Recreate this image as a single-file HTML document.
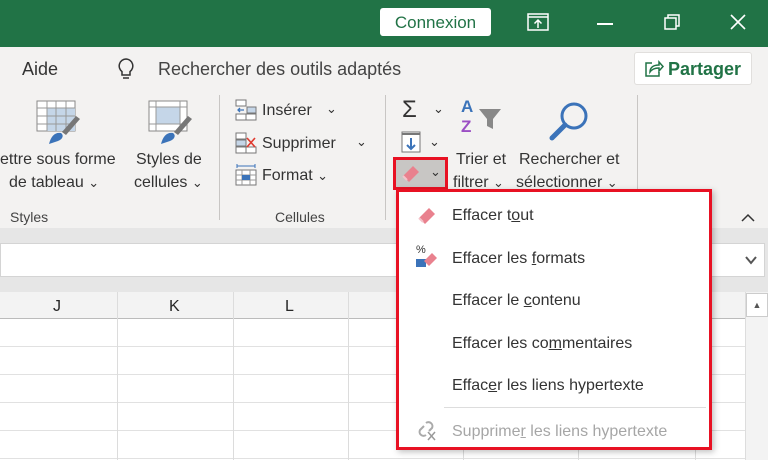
<!DOCTYPE html>
<html><head><meta charset="utf-8">
<style>
*{margin:0;padding:0;box-sizing:border-box}
body{width:768px;height:460px;overflow:hidden;position:relative;background:#fff;font-family:"Liberation Sans",sans-serif;color:#262626}
.a{position:absolute;white-space:nowrap}
.t{font-size:16px;color:#333}
.chev{font-size:13px;color:#333}
</style></head><body>
<div class="a" style="left:0;top:0;width:768px;height:47px;background:#217346"></div>
<div class="a" style="left:380px;top:8px;width:111px;height:28px;background:#fff;border-radius:3px;color:#217346;font-size:17px;line-height:29px;text-align:center">Connexion</div>
<svg class="a" style="left:527px;top:13px" width="22" height="18" viewBox="0 0 22 18"><rect x="1" y="1" width="20" height="16" fill="none" stroke="#fff" stroke-width="1.5"/><line x1="1" y1="4" x2="21" y2="4" stroke="#fff" stroke-width="1.5"/><path d="M11 15V7M7.5 10.5L11 7l3.5 3.5" fill="none" stroke="#fff" stroke-width="1.5"/></svg>
<div class="a" style="left:597px;top:23px;width:16px;height:1.5px;background:#fff"></div>
<svg class="a" style="left:664px;top:14px" width="16" height="16" viewBox="0 0 16 16"><rect x="1" y="4" width="11" height="11" fill="none" stroke="#fff" stroke-width="1.5"/><path d="M4 4V1h11v11h-3" fill="none" stroke="#fff" stroke-width="1.5"/></svg>
<svg class="a" style="left:730px;top:14px" width="16" height="16" viewBox="0 0 16 16"><path d="M1 1L15 15M15 1L1 15" stroke="#fff" stroke-width="1.6"/></svg>
<div class="a" style="left:0;top:47px;width:768px;height:181px;background:#f3f2f1"></div>
<div class="a" style="left:22px;top:59px;font-size:18px;color:#333">Aide</div>
<svg class="a" style="left:117px;top:57px" width="18" height="24" viewBox="0 0 18 24"><path d="M9 2a7 7 0 0 0-4 12.6V18h8v-3.4A7 7 0 0 0 9 2z" fill="none" stroke="#333" stroke-width="1.5"/><line x1="6" y1="21" x2="12" y2="21" stroke="#333" stroke-width="1.5"/></svg>
<div class="a" style="left:158px;top:59px;font-size:18px;color:#444">Rechercher des outils adaptés</div>
<div class="a" style="left:634px;top:52px;width:118px;height:33px;background:#fff;border:1px solid #e1dfdd;border-radius:3px"></div>
<svg class="a" style="left:644px;top:59px" width="20" height="18" viewBox="0 0 20 18"><path d="M8 4H2v13h13v-4" fill="none" stroke="#217346" stroke-width="1.5"/><path d="M6 13c0-5 4-7 9-7V3l4 4.5L15 12V9c-4 0-7 1-9 4z" fill="none" stroke="#217346" stroke-width="1.5"/></svg>
<div class="a" style="left:668px;top:59px;font-size:18px;font-weight:bold;color:#217346">Partager</div>
<svg class="a" style="left:36px;top:100px" width="46" height="44" viewBox="0 0 46 44"><rect x="1" y="1" width="38" height="30" fill="#fff" stroke="#888"/><rect x="11" y="8" width="28" height="23" fill="#c5d6e8"/><path d="M1 8h38M1 16h38M1 24h38M11 1v30M20 1v30M30 1v30" stroke="#999" stroke-width="1"/><path d="M26 32l14-16 4 3-14 16z" fill="#777"/><path d="M13 44c2-8 6-12 12-11 3 2 2 6-3 8z" fill="#3b73b9"/></svg>
<svg class="a" style="left:148px;top:100px" width="46" height="44" viewBox="0 0 46 44"><rect x="1" y="1" width="38" height="30" fill="#fff" stroke="#888"/><rect x="8" y="7" width="24" height="17" fill="#c5d6e8"/><path d="M1 7h38M1 24h38M8 1v30M32 1v30" stroke="#999"/><path d="M26 32l14-16 4 3-14 16z" fill="#777"/><path d="M13 44c2-8 6-12 12-11 3 2 2 6-3 8z" fill="#3b73b9"/></svg>
<div class="a t" style="left:0;top:151px">ettre sous forme</div>
<div class="a t" style="left:9px;top:174px">de tableau <span class="chev">⌄</span></div>
<div class="a t" style="left:136px;top:151px">Styles de</div>
<div class="a t" style="left:134px;top:174px">cellules <span class="chev">⌄</span></div>
<div class="a" style="left:10px;top:209px;font-size:14px;color:#444">Styles</div>
<div class="a" style="left:219px;top:95px;width:1px;height:125px;background:#c8c6c4"></div>
<svg class="a" style="left:235px;top:99px" width="22" height="22" viewBox="0 0 22 22"><path d="M1 1h10v6H1zM1 15h10v6H1zM11 15h10v6H11z" fill="#fff" stroke="#777"/><path d="M12 8h9v6h-9z" fill="#c5d6e8" stroke="#777"/><path d="M9 11H3M5 9l-2 2 2 2" stroke="#3b73b9" fill="none" stroke-width="1.3"/></svg>
<div class="a t" style="left:262px;top:102px">Insérer</div><div class="a chev" style="left:326px;top:101px">⌄</div>
<svg class="a" style="left:235px;top:132px" width="22" height="22" viewBox="0 0 22 22"><path d="M1 1h10v6H1zM1 15h10v6H1zM11 15h10v6H11z" fill="#fff" stroke="#777"/><path d="M1 8h10v6H1z" fill="#c5d6e8" stroke="#777"/><path d="M12 6l8 9M20 6l-8 9" stroke="#e03a2f" stroke-width="1.6"/></svg>
<div class="a t" style="left:262px;top:135px">Supprimer</div><div class="a chev" style="left:356px;top:134px">⌄</div>
<svg class="a" style="left:235px;top:163px" width="22" height="24" viewBox="0 0 22 24"><path d="M2 3h18M2 1v4M20 1v4" stroke="#3b73b9"/><rect x="1" y="7" width="20" height="15" fill="#fff" stroke="#777"/><path d="M1 12h20M1 17h20M7 7v15M15 7v15" stroke="#999"/><rect x="7" y="12" width="8" height="5" fill="#3b73b9"/></svg>
<div class="a t" style="left:262px;top:167px">Format <span class="chev">⌄</span></div>
<div class="a" style="left:275px;top:209px;font-size:14px;color:#444">Cellules</div>
<div class="a" style="left:385px;top:95px;width:1px;height:125px;background:#c8c6c4"></div>
<div class="a" style="left:402px;top:96px;font-size:24px;color:#333">Σ</div><div class="a chev" style="left:433px;top:101px">⌄</div>
<svg class="a" style="left:401px;top:131px" width="20" height="22" viewBox="0 0 20 22"><rect x="1" y="1" width="18" height="20" fill="#fff" stroke="#777"/><line x1="1" y1="3" x2="19" y2="3" stroke="#777" stroke-width="2"/><path d="M10 7v11M6 14l4 4 4-4" fill="none" stroke="#3b73b9" stroke-width="2"/></svg>
<div class="a chev" style="left:429px;top:134px">⌄</div>
<div class="a" style="left:393px;top:157px;width:55px;height:33px;border:3px solid #e81123;background:#c8c6c4"></div>
<svg class="a" style="left:400px;top:163px" width="24" height="20" viewBox="0 0 24 20"><path d="M3 13l10-10 6 6-10 10z" fill="#e9818e"/><path d="M3 13l4 4" stroke="#f4c3ca" stroke-width="2"/></svg>
<div class="a chev" style="left:430px;top:164px">⌄</div>
<div class="a" style="left:461px;top:97px;font-size:17px;color:#3b73b9;font-weight:bold">A</div>
<div class="a" style="left:461px;top:117px;font-size:17px;color:#9b4fc4;font-weight:bold">Z</div>
<svg class="a" style="left:478px;top:108px" width="24" height="22" viewBox="0 0 24 22"><path d="M1 1h22l-8 10v10l-6-3V11z" fill="#888"/></svg>
<svg class="a" style="left:548px;top:100px" width="42" height="42" viewBox="0 0 42 42"><circle cx="26" cy="16" r="12" fill="none" stroke="#3b73b9" stroke-width="3"/><path d="M17 25L4 38" stroke="#3b73b9" stroke-width="5" stroke-linecap="round"/></svg>
<div class="a t" style="left:456px;top:151px">Trier et</div>
<div class="a t" style="left:453px;top:174px">filtrer <span class="chev">⌄</span></div>
<div class="a t" style="left:519px;top:151px">Rechercher et</div>
<div class="a t" style="left:516px;top:174px">sélectionner <span class="chev">⌄</span></div>
<div class="a" style="left:637px;top:95px;width:1px;height:125px;background:#c8c6c4"></div>
<svg class="a" style="left:741px;top:213px" width="14" height="9" viewBox="0 0 14 9"><path d="M1 8l6-6 6 6" fill="none" stroke="#333" stroke-width="1.5"/></svg>
<div class="a" style="left:0;top:228px;width:768px;height:72px;background:#e6e6e6"></div>
<div class="a" style="left:0;top:243px;width:765px;height:34px;background:#fff;border:1px solid #d4d4d4"></div>
<svg class="a" style="left:745px;top:256px" width="12" height="9" viewBox="0 0 12 9"><path d="M1 1l5 6 5-6" fill="none" stroke="#555" stroke-width="2"/></svg>
<div class="a" style="left:0;top:292px;width:745px;height:27px;background:#f3f3f3;border-bottom:1px solid #bbb"></div>
<div class="a" style="left:0;top:319px;width:745px;height:141px;background-image:linear-gradient(#e1e1e1 1px,transparent 1px);background-size:100% 28px;background-position:0 27px"></div>
<div class="a" style="left:117px;top:292px;width:1px;height:168px;background:#dcdcdc"></div>
<div class="a" style="left:233px;top:292px;width:1px;height:168px;background:#dcdcdc"></div>
<div class="a" style="left:348px;top:292px;width:1px;height:168px;background:#dcdcdc"></div>
<div class="a" style="left:463px;top:292px;width:1px;height:168px;background:#dcdcdc"></div>
<div class="a" style="left:578px;top:292px;width:1px;height:168px;background:#dcdcdc"></div>
<div class="a" style="left:695px;top:292px;width:1px;height:168px;background:#dcdcdc"></div>
<div class="a" style="left:53px;top:298px;font-size:16px">J</div>
<div class="a" style="left:169px;top:298px;font-size:16px">K</div>
<div class="a" style="left:285px;top:298px;font-size:16px">L</div>
<div class="a" style="left:745px;top:292px;width:23px;height:168px;background:#f3f3f3;border-left:1px solid #ddd"></div>
<div class="a" style="left:746px;top:293px;width:22px;height:24px;background:#fff;border:1px solid #ccc;font-size:9px;text-align:center;line-height:22px;color:#555">▲</div>
<div class="a" style="left:396px;top:189px;width:316px;height:261px;background:#fff;border:3px solid #e81123;box-shadow:2px 2px 6px rgba(0,0,0,.25)"></div>
<svg class="a" style="left:416px;top:205px" width="24" height="20" viewBox="0 0 24 20"><path d="M3 13l10-10 6 6-10 10z" fill="#e9818e"/><path d="M3 13l4 4" stroke="#f4c3ca" stroke-width="2"/></svg>
<div class="a t" style="left:452px;top:207px">Effacer t<u>o</u>ut</div>
<div class="a" style="left:416px;top:244px;font-size:11px;color:#333">%</div>
<div class="a" style="left:416px;top:259px;width:10px;height:8px;background:#3b73b9"></div>
<svg class="a" style="left:422px;top:250px" width="18" height="18" viewBox="0 0 18 18"><path d="M2 11l8-8 5 5-8 8z" fill="#e9818e"/></svg>
<div class="a t" style="left:452px;top:250px">Effacer les <u>f</u>ormats</div>
<div class="a t" style="left:452px;top:292px">Effacer le <u>c</u>ontenu</div>
<div class="a t" style="left:452px;top:335px">Effacer les co<u>m</u>mentaires</div>
<div class="a t" style="left:452px;top:377px">Effac<u>e</u>r les liens hypertexte</div>
<div class="a" style="left:444px;top:407px;width:262px;height:1px;background:#ddd"></div>
<svg class="a" style="left:416px;top:420px" width="24" height="22" viewBox="0 0 24 22"><path d="M10 3a4 4 0 0 1 6 5l-3 3M8 6l-4 4a4 4 0 0 0 6 5" fill="none" stroke="#aaa" stroke-width="2"/><path d="M12 12l7 8M19 12l-7 8" stroke="#999" stroke-width="1.5"/></svg>
<div class="a t" style="left:452px;top:423px;color:#a6a6a6">Supprime<u>r</u> les liens hypertexte</div>
</body></html>
